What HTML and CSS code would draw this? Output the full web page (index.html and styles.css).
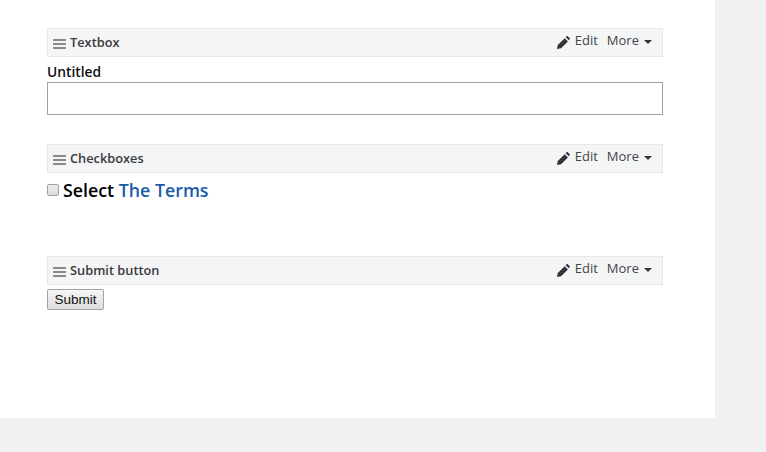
FILE: index.html
```html
<!DOCTYPE html>
<html lang="en">

<head>
  <meta charset="UTF-8">
  <title>Form builder</title>
  <link rel="stylesheet" href="styles.css">
</head>

<body>
  <div class="page">
    <div class="field field-textbox">
      <div class="field-bar">
        <svg class="drag-icon" width="13" height="10" viewBox="0 0 13 10"><path d="M0 0h13v2H0zM0 4h13v2H0zM0 8h13v2H0z"/></svg>
        <span class="field-name">Textbox</span>
        <span class="field-actions">
          <svg class="edit-icon" width="13" height="13" viewBox="0 0 12 12"><path d="M0 12l.7-3.600L7.100 2l3 3-6.400 6.300zM8 1.100l.7-.7c.4-.4 1-.4 1.400 0l1.500 1.500c.4.4.4 1 0 1.400l-.7.7z"/></svg>
          <a class="action-edit">Edit</a>
          <a class="action-more">More<span class="caret"></span></a>
        </span>
      </div>
      <label class="field-label">Untitled</label>
      <input class="text-input" type="text">
    </div>

    <div class="field field-checkbox">
      <div class="field-bar">
        <svg class="drag-icon" width="13" height="10" viewBox="0 0 13 10"><path d="M0 0h13v2H0zM0 4h13v2H0zM0 8h13v2H0z"/></svg>
        <span class="field-name">Checkboxes</span>
        <span class="field-actions">
          <svg class="edit-icon" width="13" height="13" viewBox="0 0 12 12"><path d="M0 12l.7-3.600L7.100 2l3 3-6.400 6.300zM8 1.100l.7-.7c.4-.4 1-.4 1.400 0l1.500 1.500c.4.4.4 1 0 1.400l-.7.7z"/></svg>
          <a class="action-edit">Edit</a>
          <a class="action-more">More<span class="caret"></span></a>
        </span>
      </div>
      <div class="check-row">
        <input class="check" type="checkbox">
        <span>Select <a class="terms-link">The Terms</a></span>
      </div>
    </div>

    <div class="field">
      <div class="field-bar">
        <svg class="drag-icon" width="13" height="10" viewBox="0 0 13 10"><path d="M0 0h13v2H0zM0 4h13v2H0zM0 8h13v2H0z"/></svg>
        <span class="field-name">Submit button</span>
        <span class="field-actions">
          <svg class="edit-icon" width="13" height="13" viewBox="0 0 12 12"><path d="M0 12l.7-3.600L7.100 2l3 3-6.400 6.300zM8 1.100l.7-.7c.4-.4 1-.4 1.400 0l1.500 1.500c.4.4.4 1 0 1.400l-.7.7z"/></svg>
          <a class="action-edit">Edit</a>
          <a class="action-more">More<span class="caret"></span></a>
        </span>
      </div>
      <button class="submit-button" type="button">Submit</button>
    </div>
  </div>
</body>

</html>
```

FILE: styles.css
```css
html,
body {
  height: 100%;
}

body {
  margin: 0;
  background-color: #f1f1f1;
  font-family: "Open Sans", sans-serif;
  overflow: hidden;
}

.page {
  box-sizing: border-box;
  width: 715px;
  height: 418px;
  padding: 28px 52px 0 47px;
  background-color: #fff;
}

.field-textbox {
  height: 116px;
}

.field-checkbox {
  height: 112px;
}

.field-bar {
  box-sizing: border-box;
  display: flex;
  align-items: center;
  height: 29px;
  padding: 0 10px 0 5px;
  border: 1px solid #e8e9eb;
  background-color: #f4f5f7;
  color: #3a3a3a;
  font-size: 12.800px;
  font-weight: 600;
}

.drag-icon {
  margin: 3px 4px 0 0;
  fill: #8a8a8a;
}

.field-name {
  margin-top: -2px;
}

.field-actions {
  display: flex;
  align-items: center;
  margin-left: auto;
  font-size: 13px;
  font-weight: 400;
  color: #444;
}

.edit-icon {
  margin: -1px 5px 0 0;
  fill: #333;
}

.action-edit {
  margin-top: -6px;
  margin-right: 9px;
}

.action-more {
  margin-top: -6px;
}

.caret {
  display: inline-block;
  margin-left: 5px;
  vertical-align: 1px;
  border-top: 4.500px solid #333;
  border-left: 4.500px solid transparent;
  border-right: 4.500px solid transparent;
}

.field-label {
  display: block;
  margin-top: 5px;
  height: 20px;
  line-height: 20px;
  color: #111;
  font-size: 13.800px;
  font-weight: 600;
}

.text-input {
  box-sizing: border-box;
  display: block;
  width: 100%;
  height: 33px;
  border: 1px solid #a0a0a0;
  background-color: #fff;
}

.check-row {
  display: flex;
  align-items: center;
  margin-top: 4px;
  color: #000;
  font-size: 17.800px;
  font-weight: 600;
  line-height: 26px;
}

.check {
  appearance: none;
  box-sizing: border-box;
  width: 12px;
  height: 12px;
  margin: 0 4px 0 0;
  border: 1px solid #a0a0a0;
  border-radius: 2px;
  background: linear-gradient(#ececec, #dcdcdc);
}

.terms-link {
  color: #1a5aaa;
}

.submit-button {
  display: block;
  box-sizing: border-box;
  width: 57px;
  height: 21px;
  margin-top: 4px;
  padding: 0;
  border: 1px solid #a3a3a3;
  border-radius: 2px;
  background: linear-gradient(#f6f6f6, #dddddd);
  color: #111;
  font-family: "Liberation Sans", sans-serif;
  font-size: 13.500px;
}
```
